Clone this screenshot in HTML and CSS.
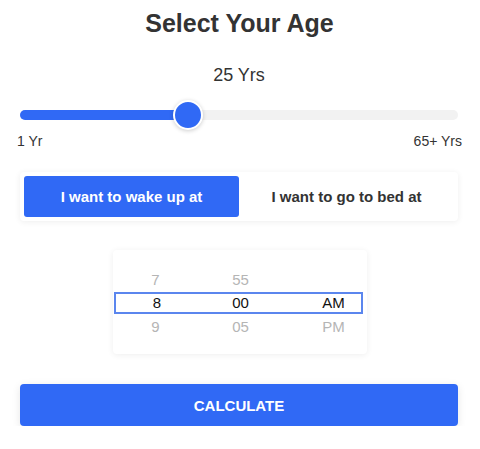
FILE: index.html
```html
<!DOCTYPE html>
<html lang="en">
	<head>
		<title>Sleep Calculator</title>
		<meta http-equiv="Content-Type" content="text/html; charset=utf-8">
		<meta name="viewport" content="width=device-width, initial-scale=1.0">
		<link rel="stylesheet" href="styles.css">
	</head>
	<body>
		<div class="main">
			<h1>Select Your Age</h1>
			<div class="age">25 Yrs</div>
			<div class="slider">
				<div class="track">
					<div class="fill" style="width: 168px;"></div>
					<div class="thumb" style="left: 168px;"></div>
				</div>
			</div>
			<div class="range-labels">
				<span>1 Yr</span>
				<span>65+ Yrs</span>
			</div>
			<div class="toggle">
				<button class="active">I want to wake up at</button>
				<button>I want to go to bed at</button>
			</div>
			<div class="picker-wrap">
				<div class="picker">
					<div class="row faded"><span>7</span><span>55</span><span></span></div>
					<div class="row selected"><span>8</span><span>00</span><span>AM</span></div>
					<div class="row faded"><span>9</span><span>05</span><span>PM</span></div>
				</div>
			</div>
			<button class="calc">CALCULATE</button>
		</div>
	</body>
</html>
```

FILE: styles.css
```css
body {
	font-family: Arial, 'Liberation Sans', Helvetica, sans-serif;
	margin: 0;
	color: #333;
	background: #fff;
}
.main {
	padding: 0 22px 0 20px;
}
h1 {
	text-align: center;
	font-size: 25px;
	font-weight: 700;
	margin: 0 0 0 1px;
	padding-top: 9px;
	line-height: 29px;
	color: #333;
}
.age {
	text-align: center;
	font-size: 18px;
	margin-top: 27px;
	line-height: 21px;
}
.slider {
	margin-top: 14px;
	padding: 10px 0;
}
.track {
	position: relative;
	height: 10px;
	border-radius: 5px;
	background: #f2f2f2;
}
.fill {
	height: 100%;
	border-radius: 5px;
	background: #3069f5;
}
.thumb {
	position: absolute;
	top: 50%;
	width: 26px;
	height: 26px;
	margin: -15px 0 0 -15px;
	border-radius: 50%;
	background: #3069f5;
	border: 2px solid #fff;
	box-shadow: 0 1px 4px rgba(0, 0, 0, 0.2);
}
.range-labels {
	display: flex;
	justify-content: space-between;
	font-size: 14px;
	line-height: 16px;
	margin: 3px -4px 0 -3px;
}
.toggle {
	display: flex;
	margin-top: 23px;
	padding: 4px;
	background: #fff;
	border-radius: 4px;
	box-shadow: 0 1px 6px rgba(0, 0, 0, 0.07);
}
.toggle button {
	flex: 1;
	height: 41px;
	border: none;
	border-radius: 3px;
	background: none;
	font-family: inherit;
	font-size: 15px;
	font-weight: 700;
	color: #333;
}
.toggle button.active {
	background: #3069f5;
	color: #fff;
}
.picker-wrap {
	display: flex;
	justify-content: center;
	margin-top: 29px;
}
.picker {
	width: 254px;
	padding: 18px 0 16px;
	margin-left: 1px;
	background: #fff;
	border-radius: 4px;
	box-shadow: 0 1px 6px rgba(0, 0, 0, 0.07);
	font-size: 15px;
}
.row {
	display: grid;
	grid-template-columns: 86px 84px 84px;
	height: 23px;
	line-height: 23px;
	text-align: center;
}
.row span:last-child {
	padding-left: 18px;
}
.faded {
	color: #b5b5b5;
}
.selected {
	color: #111;
	margin: 1px 4px 1px 1px;
	height: 18px;
	line-height: 18px;
	border: 2px solid #5b86ee;
	grid-template-columns: 83px 84px 84px;
}
.calc {
	display: block;
	width: 100%;
	height: 42px;
	margin-top: 30px;
	border: none;
	border-radius: 4px;
	background: #3069f5;
	color: #fff;
	font-family: inherit;
	font-size: 15px;
	font-weight: 700;
	box-shadow: 0 2px 8px rgba(0, 0, 0, 0.1);
}
```
